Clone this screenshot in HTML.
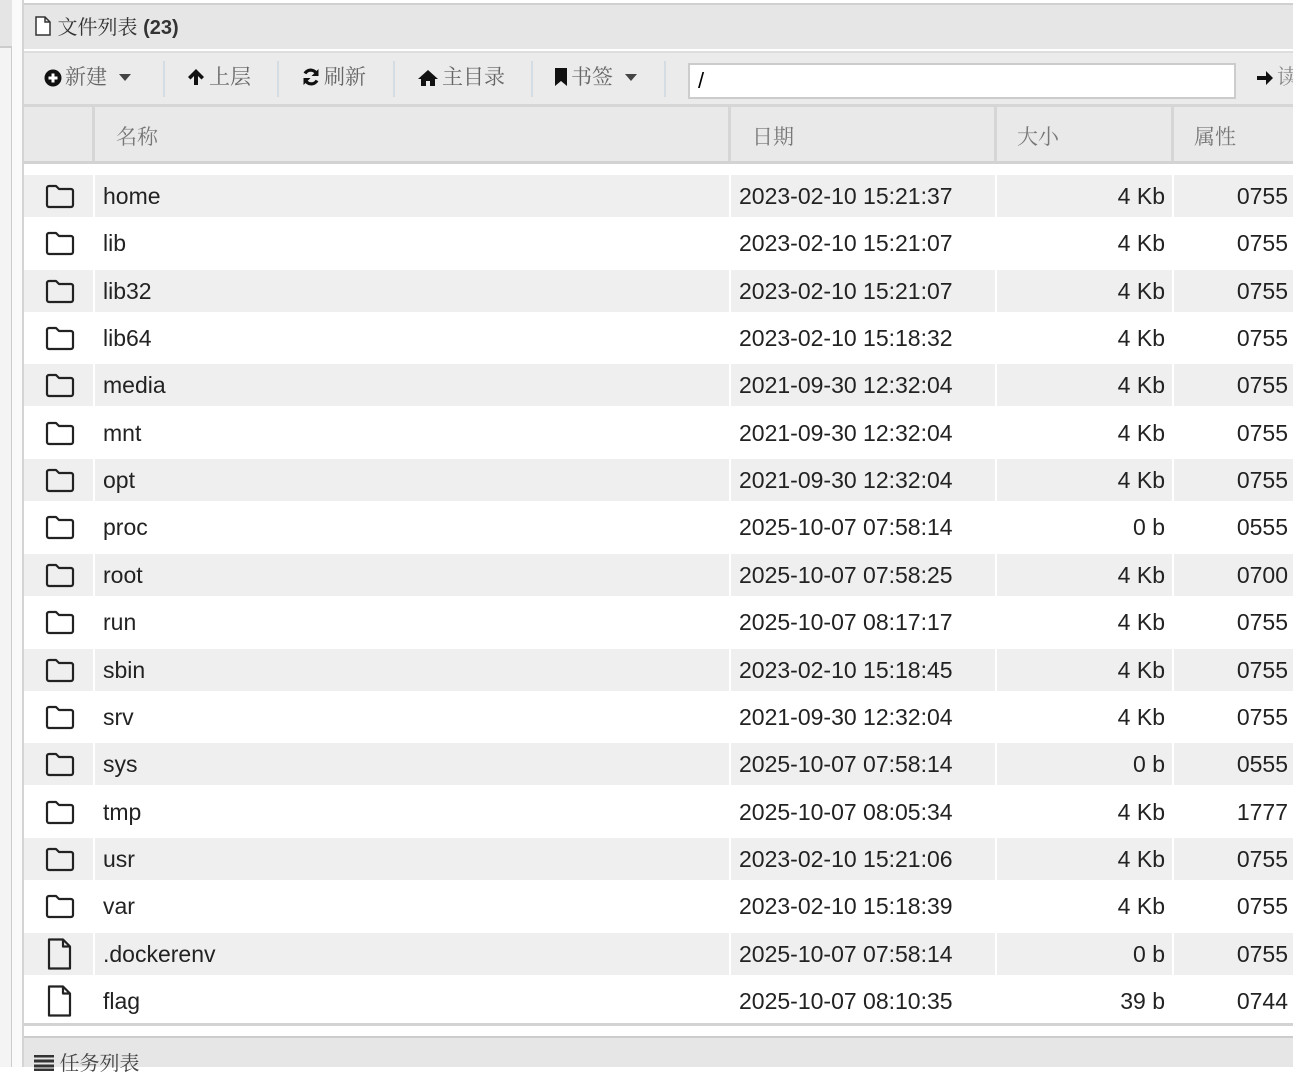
<!DOCTYPE html>
<html><head><meta charset="utf-8"><style>
*{margin:0;padding:0;box-sizing:border-box}
body{width:1293px;height:1067px;overflow:hidden;background:#fff;font-family:"Liberation Sans","Noto Sans CJK SC",sans-serif;position:relative}
.left{position:absolute;left:0;top:0;width:12px;height:1067px;background:#f4f4f4;border-right:1px solid #ccc}
.left2{position:absolute;left:12px;top:0;width:12px;height:1067px;background:#fafafa;border-right:2px solid #d4d4d4}
.lefttop{position:absolute;left:0;top:0;width:12px;height:48px;background:#e5e5e5;border-bottom:2px solid #ccc}
.panel{position:absolute;left:24px;top:0;width:1269px}
.serif{font-family:"Liberation Sans","Noto Serif CJK SC",serif}
.title{position:absolute;top:3px;left:0;width:1269px;height:46px;background:#e6e6e6;border-top:2px solid #d0d0d0;font-size:20px;color:#333;padding:6px 0 0 10px}
.tb{position:absolute;top:51px;left:0;width:1269px;height:56px;background:#ebebeb;border-top:2px solid #ddd;border-bottom:3px solid #d6d6d6}
.btn{position:absolute;top:10px;font-size:21px;color:#666;height:30px;line-height:30px;white-space:nowrap}
.btn svg{vertical-align:-3px;margin-right:3px}
.dd{display:inline-block;width:0;height:0;border-left:6px solid transparent;border-right:6px solid transparent;border-top:7px solid #444;margin-left:12px;vertical-align:3px}
.sep{position:absolute;top:8px;width:2px;height:36px;background:#d3dde3}
.path{position:absolute;left:664px;top:10px;width:548px;height:36px;background:#fff;border:2px solid #ccc;font-size:22px;padding:3px 8px}
.hd{position:absolute;top:107px;left:0;width:1269px;height:57px;background:#e9e9e9;border-bottom:3px solid #d3d3d3}
.hc{position:absolute;top:0;height:54px;border-right:3px solid #d6d6d6;font-size:21px;color:#777;padding-top:14px}
.row{position:absolute;left:0;width:1269px;height:47.35px}
.c{position:absolute;top:0;height:42px;font-size:23px;color:#222;line-height:42px;white-space:nowrap}
.g .c{background:#efefef}
.ico{left:0;width:69px}
.nm{left:71px;width:634px;padding-left:8px}
.dt{left:707px;width:264px;padding-left:8px}
.sz{left:973px;width:175px;text-align:right;padding-right:7px}
.at{left:1150px;width:119px;text-align:right;padding-right:5px}
.ico svg{position:absolute;left:20px;top:8px}
.bottom{position:absolute;left:24px;top:1023px;width:1269px;height:44px;background:#fff;border-top:3px solid #d3d3d3}
.bp{position:absolute;left:24px;top:1036px;width:1269px;height:31px;background:#e6e6e6;border-top:2px solid #ccc;font-size:20px;color:#444;padding:9px 0 0 10px;white-space:nowrap}
</style></head><body>
<div class="left"></div><div class="lefttop"></div><div class="left2"></div>
<div class="panel">
<div class="title serif"><svg width="18" height="20" viewBox="0 0 18 20" style="vertical-align:-2px"><path d="M2 1h9l5 5v13H2z M11 1v5h5" fill="#fff" stroke="#333" stroke-width="1.5"/></svg> 文件列表 <b style="font-family:'Liberation Sans'">(23)</b></div>
<div class="tb serif">
<div class="btn" style="left:20px"><svg width="18" height="18" viewBox="0 0 18 18"><circle cx="9" cy="9" r="8.5" fill="#111"/><path d="M9 4.5v9M4.5 9h9" stroke="#fff" stroke-width="3"/></svg>新建<span class="dd"></span></div>
<div class="sep" style="left:139px"></div>
<div class="btn" style="left:162px"><svg width="20" height="20" viewBox="0 0 20 20"><path d="M10 2L2 10l2.5 2.5L8 9v9h4V9l3.5 3.5L18 10z" fill="#111"/></svg>上层</div>
<div class="sep" style="left:253px"></div>
<div class="btn" style="left:277px"><svg width="20" height="20" viewBox="0 0 20 20"><path d="M16 8A6.5 6.5 0 0 0 4 6.5M4 12a6.5 6.5 0 0 0 12 1.5" fill="none" stroke="#111" stroke-width="3.2"/><path d="M17.5 2v7h-7zM2.5 18v-7h7z" fill="#111"/></svg>刷新</div>
<div class="sep" style="left:369px"></div>
<div class="btn" style="left:393px"><svg width="22" height="18" viewBox="0 0 22 18"><path d="M11 1L1 10h3v7h5v-5h4v5h5v-7h3z" fill="#111"/></svg>主目录</div>
<div class="sep" style="left:507px"></div>
<div class="btn" style="left:530px"><svg width="14" height="20" viewBox="0 0 14 20"><path d="M1 1h12v18l-6-5-6 5z" fill="#111"/></svg>书签<span class="dd"></span></div>
<div class="sep" style="left:640px"></div>
<div class="path" style="font-family:'Liberation Sans'">/</div>
<div class="btn" style="left:1232px;color:#888"><svg width="18" height="18" viewBox="0 0 18 18"><path d="M1 7h9V2l7 7-7 7v-5H1z" fill="#111"/></svg>读</div>
</div>
<div class="hd serif">
<div class="hc" style="left:0;width:71px"></div>
<div class="hc" style="left:71px;width:636px;padding-left:21px">名称</div>
<div class="hc" style="left:707px;width:266px;padding-left:21px">日期</div>
<div class="hc" style="left:973px;width:177px;padding-left:20px">大小</div>
<div class="hc" style="left:1150px;width:119px;padding-left:20px;border-right:none">属性</div>
</div>
</div>
<div id="rows" style="position:absolute;left:24px;top:175px;width:1269px">
</div>
<div class="bottom"></div>
<div class="bp serif"><svg width="20" height="16" viewBox="0 0 20 16" style="vertical-align:-1px"><path d="M0 1h20M0 6h20M0 11h20M0 15h20" stroke="#333" stroke-width="3"/></svg> 任务列表</div>
<script>
var d=[["home","2023-02-10 15:21:37","4 Kb","0755"],["lib","2023-02-10 15:21:07","4 Kb","0755"],["lib32","2023-02-10 15:21:07","4 Kb","0755"],["lib64","2023-02-10 15:18:32","4 Kb","0755"],["media","2021-09-30 12:32:04","4 Kb","0755"],["mnt","2021-09-30 12:32:04","4 Kb","0755"],["opt","2021-09-30 12:32:04","4 Kb","0755"],["proc","2025-10-07 07:58:14","0 b","0555"],["root","2025-10-07 07:58:25","4 Kb","0700"],["run","2025-10-07 08:17:17","4 Kb","0755"],["sbin","2023-02-10 15:18:45","4 Kb","0755"],["srv","2021-09-30 12:32:04","4 Kb","0755"],["sys","2025-10-07 07:58:14","0 b","0555"],["tmp","2025-10-07 08:05:34","4 Kb","1777"],["usr","2023-02-10 15:21:06","4 Kb","0755"],["var","2023-02-10 15:18:39","4 Kb","0755"],[".dockerenv","2025-10-07 07:58:14","0 b","0755",1],["flag","2025-10-07 08:10:35","39 b","0744",1]];
var fo='<svg width="32" height="26" viewBox="0 0 32 26"><path d="M3 5a2 2 0 0 1 2-2h7l3 3h12a2 2 0 0 1 2 2v14a2 2 0 0 1-2 2H5a2 2 0 0 1-2-2z" fill="none" stroke="#222" stroke-width="2.2" stroke-linejoin="round"/></svg>';
var fi='<svg width="32" height="32" viewBox="0 0 32 32" style="top:5px"><path d="M5 1.5h14l7 7v22H5z M19 1.5v7h7" fill="none" stroke="#222" stroke-width="2.2" stroke-linejoin="round"/></svg>';
var h='';d.forEach(function(r,i){h+='<div class="row'+(i%2==0?' g':'')+'" style="top:'+(i*47.35)+'px"><div class="c ico">'+(r[4]?fi:fo)+'</div><div class="c nm">'+r[0]+'</div><div class="c dt">'+r[1]+'</div><div class="c sz">'+r[2]+'</div><div class="c at">'+r[3]+'</div></div>'});
document.getElementById('rows').innerHTML=h;
</script>
</body></html>
